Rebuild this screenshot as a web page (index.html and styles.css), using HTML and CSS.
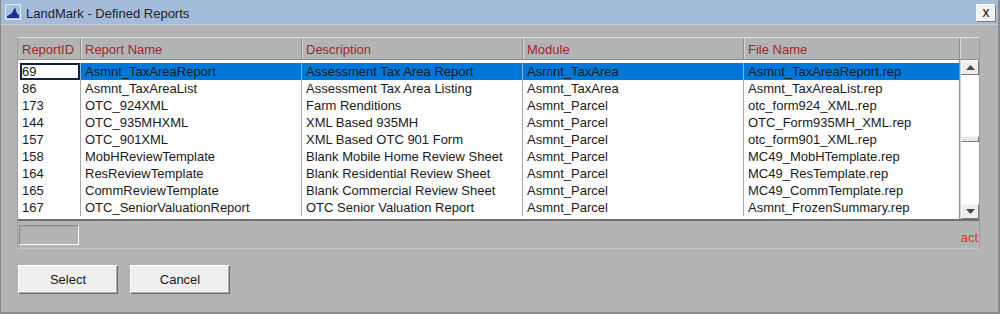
FILE: index.html
```html
<!DOCTYPE html>
<html>
<head>
<meta charset="utf-8">
<link rel="stylesheet" href="styles.css">
</head>
<body>
<div class="window">
  <div class="titlebar">
    <div class="appicon">
      <svg width="14" height="14" viewBox="0 0 14 14"><rect x="0" y="0" width="14" height="14" fill="#a9c3e3"/><path d="M1 13 L1 11 L4 9.5 L6 8 L8 4 L9 2 L10 6 L11.5 9 L13 10 L13 13 Z" fill="#1d2f9a"/></svg>
    </div>
    <div class="title">LandMark - Defined Reports</div>
    <div class="close">x</div>
  </div>
  <div class="content">
    <div class="frame">
      <div class="head">
        <div class="hc">ReportID</div>
        <div class="hc">Report Name</div>
        <div class="hc">Description</div>
        <div class="hc">Module</div>
        <div class="hc">File Name</div>
        <div class="hc hs"></div>
      </div>
      <div class="bodyrow">
        <div class="rows">
          <div class="row sel"><div class="c focus">69</div><div class="c">Asmnt_TaxAreaReport</div><div class="c">Assessment Tax Area Report</div><div class="c">Asmnt_TaxArea</div><div class="c">Asmnt_TaxAreaReport.rep</div></div>
          <div class="row"><div class="c">86</div><div class="c">Asmnt_TaxAreaList</div><div class="c">Assessment Tax Area Listing</div><div class="c">Asmnt_TaxArea</div><div class="c">Asmnt_TaxAreaList.rep</div></div>
          <div class="row"><div class="c">173</div><div class="c">OTC_924XML</div><div class="c">Farm Renditions</div><div class="c">Asmnt_Parcel</div><div class="c">otc_form924_XML.rep</div></div>
          <div class="row"><div class="c">144</div><div class="c">OTC_935MHXML</div><div class="c">XML Based 935MH</div><div class="c">Asmnt_Parcel</div><div class="c">OTC_Form935MH_XML.rep</div></div>
          <div class="row"><div class="c">157</div><div class="c">OTC_901XML</div><div class="c">XML Based OTC 901 Form</div><div class="c">Asmnt_Parcel</div><div class="c">otc_form901_XML.rep</div></div>
          <div class="row"><div class="c">158</div><div class="c">MobHReviewTemplate</div><div class="c">Blank Mobile Home Review Sheet</div><div class="c">Asmnt_Parcel</div><div class="c">MC49_MobHTemplate.rep</div></div>
          <div class="row"><div class="c">164</div><div class="c">ResReviewTemplate</div><div class="c">Blank Residential Review Sheet</div><div class="c">Asmnt_Parcel</div><div class="c">MC49_ResTemplate.rep</div></div>
          <div class="row"><div class="c">165</div><div class="c">CommReviewTemplate</div><div class="c">Blank Commercial Review Sheet</div><div class="c">Asmnt_Parcel</div><div class="c">MC49_CommTemplate.rep</div></div>
          <div class="row"><div class="c">167</div><div class="c">OTC_SeniorValuationReport</div><div class="c">OTC Senior Valuation Report</div><div class="c">Asmnt_Parcel</div><div class="c">Asmnt_FrozenSummary.rep</div></div>
        </div>
        <div class="vscroll">
          <div class="sbtn"><svg width="9" height="5" viewBox="0 0 9 5"><path d="M0 5 L4.5 0 L9 5 Z" fill="#3a4a5c"/></svg></div>
          <div class="track"><div class="thumb"></div></div>
          <div class="sbtn"><svg width="9" height="5" viewBox="0 0 9 5"><path d="M0 0 L9 0 L4.5 5 Z" fill="#3a4a5c"/></svg></div>
        </div>
      </div>
      <div class="foot">
        <div class="smallbox"></div>
        <div class="act">act</div>
      </div>
    </div>
    <div class="buttons">
      <div class="btn">Select</div>
      <div class="btn">Cancel</div>
    </div>
  </div>
</div>
</body>
</html>
```

FILE: styles.css
```css
html, body {
  margin: 0;
  padding: 0;
  background: #b4b4b4;
}
body {
  font-family: "Liberation Sans", Arial, sans-serif;
  font-size: 13px;
  color: #1a1a1a;
}
.window {
  width: 1000px;
  height: 314px;
  box-sizing: border-box;
  background: #b4b4b4;
  border-left: 1px solid #8a8a8a;
  border-right: 2px solid #8a8a8a;
  border-bottom: 2px solid #8a8a8a;
}
.titlebar {
  height: 24px;
  background: #a3bcd9;
  display: flex;
  align-items: center;
  border-bottom: 1px solid #c2d0e0;
}
.appicon {
  width: 14px;
  height: 14px;
  margin-left: 4px;
  border: 1px solid #e4ecf6;
  display: flex;
}
.title {
  margin-left: 5px;
  padding-top: 2px;
  color: #1e2328;
  font-size: 13px;
  flex: 1;
}
.close {
  width: 20px;
  height: 18px;
  margin-right: 2px;
  margin-top: 2px;
  background: #f2f2f2;
  border: 1px solid #ffffff;
  border-right-color: #7a7a7a;
  border-bottom-color: #7a7a7a;
  display: flex;
  align-items: center;
  justify-content: center;
  font-size: 14px;
  line-height: 14px;
  padding-bottom: 2px;
  box-sizing: border-box;
  color: #111;
}
.content {
  padding: 12px 0 0 16px;
}
.frame {
  width: 963px;
  box-sizing: border-box;
  border: 1px solid #9c9c9c;
  border-top-color: #e2e2e2;
  border-bottom-color: #c6c6c6;
}
.head {
  display: grid;
  grid-template-columns: 63px 221px 221px 221px 216px 19px;
  height: 21px;
  border-bottom: 1px solid #8c8c8c;
}
.hc {
  color: #a0282a;
  padding-left: 4px;
  padding-top: 3px;
  line-height: 18px;
  border-right: 1px solid #8e8e8e;
  box-shadow: inset 1px 0 0 #d8d8d8;
  white-space: nowrap;
}
.hc:first-child {
  box-shadow: none;
}
.hc.hs {
  border-right: none;
}
.bodyrow {
  display: flex;
  height: 159px;
  border-bottom: 2px solid #6e6e6e;
}
.rows {
  width: 942px;
  background: #ffffff;
  padding-top: 3px;
  box-sizing: border-box;
  border-right: 1px solid #8e8e8e;
}
.row {
  display: grid;
  grid-template-columns: 63px 221px 221px 221px 215px;
  height: 17px;
}
.c {
  padding-left: 4px;
  line-height: 17px;
  border-right: 1px solid #a8a8a8;
  white-space: nowrap;
  overflow: hidden;
}
.row .c:last-child {
  border-right: none;
}
.row.sel .c {
  background: #0078d7;
  border-right-color: #7fb6e6;
}
.row.sel .c.focus {
  background: #ffffff;
  box-shadow: inset 0 0 0 2px #15233a;
  margin-left: 2px;
  padding-left: 2px;
}
.vscroll {
  width: 19px;
  display: flex;
  flex-direction: column;
  background: #ffffff;
  border-left: 1px solid #d0d0d0;
  box-sizing: border-box;
}
.sbtn {
  height: 15px;
  background: #eeeeee;
  border: 1px solid #fafafa;
  border-right-color: #7a7a7a;
  border-bottom-color: #7a7a7a;
  box-sizing: border-box;
  display: flex;
  align-items: center;
  justify-content: center;
}
.track {
  flex: 1;
  background: #ffffff;
  padding-top: 61px;
}
.thumb {
  height: 6px;
  background: #e6e6e6;
  border: 1px solid #f8f8f8;
  border-right-color: #808080;
  border-bottom-color: #808080;
  box-sizing: border-box;
}
.foot {
  height: 27px;
  display: flex;
  align-items: center;
  justify-content: space-between;
}
.smallbox {
  width: 60px;
  height: 20px;
  margin-left: 1px;
  box-sizing: border-box;
  border: 1px solid #ffffff;
  border-top-color: #8c8c8c;
  border-left-color: #8c8c8c;
  box-shadow: inset 1px 1px 0 #a6a6a6;
}
.act {
  color: #e8302c;
  padding-right: 1px;
  padding-top: 6px;
}
.buttons {
  display: flex;
  gap: 12px;
  margin-top: 16px;
  margin-left: 1px;
}
.btn {
  width: 100px;
  height: 29px;
  box-sizing: border-box;
  background: #efefef;
  border: 1px solid #ffffff;
  border-right-color: #6a6a6a;
  border-bottom-color: #6a6a6a;
  box-shadow: inset -1px -1px 0 #b0b0b0;
  display: flex;
  align-items: center;
  justify-content: center;
  color: #1a1a1a;
}
```
